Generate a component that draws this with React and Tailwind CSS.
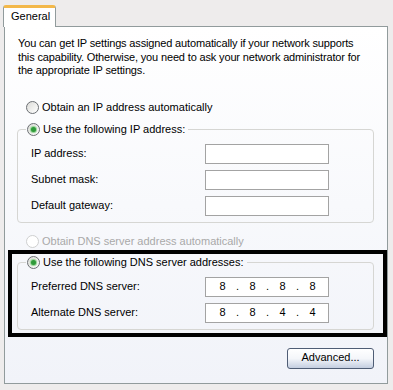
import React from "react";

const font = { fontFamily: '"Liberation Sans", Arial, sans-serif' };

function Radio({ checked, disabled }) {
  return (
    <span
      className={
        "inline-flex items-center justify-center w-[13px] h-[13px] rounded-full border bg-gradient-to-br " +
        (disabled
          ? "border-[#cfd0d0] from-white to-white"
          : "border-[#6b6f73] from-[#dcdcd8] to-white")
      }
    >
      {checked && (
        <span className="w-[5px] h-[5px] rounded-full bg-[#2f9a3a] shadow-[0_0_1px_1px_#8fd28f]" />
      )}
    </span>
  );
}

function RadioRow({ label, checked, disabled }) {
  return (
    <div className="flex items-center h-[16px] ml-[21px]">
      <Radio checked={checked} disabled={disabled} />
      <span className={"ml-[3px] " + (disabled ? "text-[#a9a9a9]" : "text-black")}>
        {label}
      </span>
    </div>
  );
}

function Field({ label, value }) {
  return (
    <div className="flex items-center h-[20px]">
      <span className="w-[188px] pl-[14px]">{label}</span>
      <div className="w-[124px] h-[20px] border border-[#a3a3a3] bg-white flex items-center pl-[6px]">
        {value &&
          value.split(".").map((o, i) => (
            <React.Fragment key={i}>
              {i > 0 && <span className="w-[9px] text-center">.</span>}
              <span className="w-[21px] text-center">{o}</span>
            </React.Fragment>
          ))}
      </div>
    </div>
  );
}

function Group({ legend, children }) {
  return (
    <fieldset className="ml-[12px] w-[357px] border border-[#d6d6d3] rounded-[4px] pb-[6px]">
      <legend className="ml-[8px] pr-[3px]">
        <div className="flex items-center h-[16px] pl-[1px]">
          <Radio checked />
          <span className="ml-[3px]">{legend}</span>
        </div>
      </legend>
      <div className="flex flex-col gap-[6px] mt-[6px] -ml-px">{children}</div>
    </fieldset>
  );
}

export default function App() {
  return (
    <div
      className="w-[393px] h-[390px] bg-[#eeecec] pt-[5px] pl-[3px] text-[11px] leading-[13.5px] text-black"
      style={font}
    >
      <div className="relative z-10 -mb-px w-[53px] h-[22px] bg-white border border-b-0 border-[#919b9c] border-t-[3px] border-t-[#f3b84a] rounded-t-[3px] pl-[7px] pt-[2px]">
        General
      </div>
      <div className="ml-px w-[384px] h-[358px] border border-[#919b9c] bg-gradient-to-b from-white to-[#f1f3f9] flex flex-col">
        <p className="mt-[10px] pl-[13px] whitespace-nowrap tracking-[-0.15px]">
          You can get IP settings assigned automatically if your network supports
          <br />
          this capability. Otherwise, you need to ask your network administrator for
          <br />
          the appropriate IP settings.
        </p>
        <div className="mt-[22px]">
          <RadioRow label="Obtain an IP address automatically" />
        </div>
        <div className="mt-[6px]">
          <Group legend="Use the following IP address:">
            <Field label="IP address:" />
            <Field label="Subnet mask:" />
            <Field label="Default gateway:" />
          </Group>
        </div>
        <div className="mt-[11px]">
          <RadioRow label="Obtain DNS server address automatically" disabled />
        </div>
        <div className="ml-[3px] w-[379px] border-4 border-black pt-[1px] pb-[3px]">
          <div className="ml-[-7px]">
            <Group legend="Use the following DNS server addresses:">
              <Field label="Preferred DNS server:" value="8.8.8.8" />
              <Field label="Alternate DNS server:" value="8.8.4.4" />
            </Group>
          </div>
        </div>
        <div className="flex justify-end mt-[11px] pr-[13px]">
          <button className="w-[87px] h-[21px] rounded-[3px] border border-[#4f5d75] bg-gradient-to-b from-white via-[#f4f6fa] to-[#c4cee0] text-[11px]">
            Advanced...
          </button>
        </div>
      </div>
    </div>
  );
}
